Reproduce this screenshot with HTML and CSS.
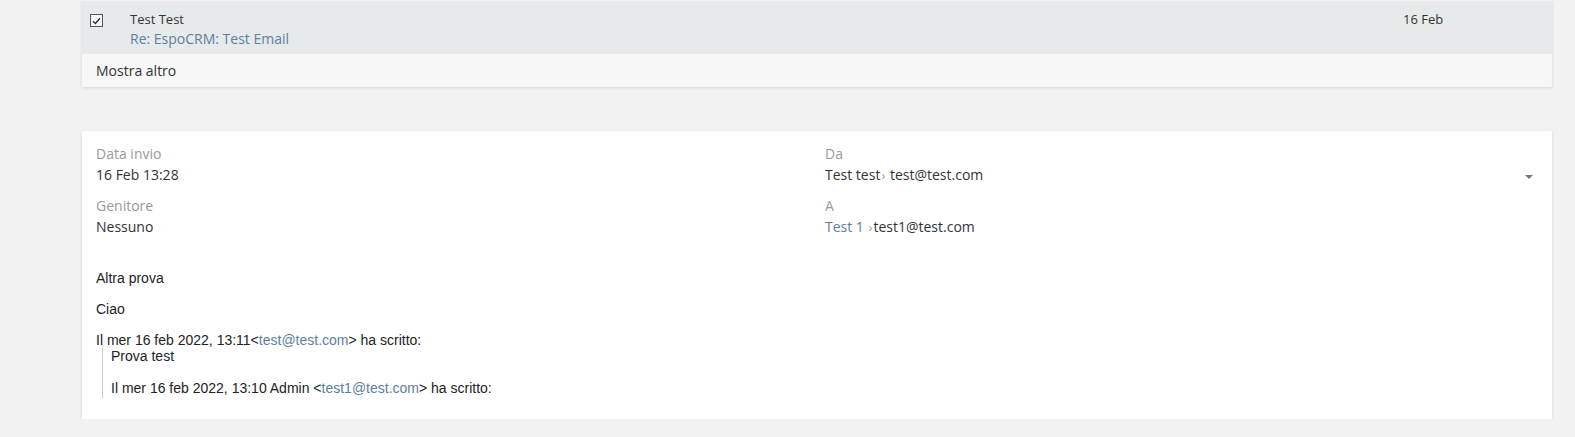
FILE: index.html
```html
<!doctype html>
<html lang="it">
<head>
<meta charset="utf-8">
<title>Email</title>
<link rel="stylesheet" href="styles.css">
</head>
<body>

<div class="wrap">
  <div class="panel list">
    <div class="item selected">
      <span class="check">
        <svg width="9" height="8" viewBox="0 0 9 8"><path d="M1 4.2 3.4 6.5 8 1.3" fill="none" stroke="#333" stroke-width="1.4"/></svg>
      </span>
      <div class="item-main">
        <div class="item-name">Test Test</div>
        <a class="item-subject">Re: EspoCRM: Test Email</a>
      </div>
      <div class="item-date">16 Feb</div>
    </div>
    <div class="show-more">Mostra altro</div>
  </div>

  <div class="panel detail">
    <span class="caret"></span>
    <div class="fields">
      <div class="field">
        <div class="label">Data invio</div>
        <div class="value">16 Feb 13:28</div>
      </div>
      <div class="field">
        <div class="label">Da</div>
        <div class="value">Test test<span class="sep">›</span> test@test.com</div>
      </div>
      <div class="field">
        <div class="label">Genitore</div>
        <div class="value">Nessuno</div>
      </div>
      <div class="field">
        <div class="label">A</div>
        <div class="value"><a>Test 1</a> <span class="sep">›</span>test1@test.com</div>
      </div>
    </div>

    <div class="mail-body">
      <p>Altra prova</p>
      <p>Ciao</p>
      <div>Il mer 16 feb 2022, 13:11&lt;<a>test@test.com</a>&gt; ha scritto:</div>
      <blockquote>
        Prova test<br><br>
        Il mer 16 feb 2022, 13:10 Admin &lt;<a>test1@test.com</a>&gt; ha scritto:
      </blockquote>
    </div>
  </div>
</div>

</body>
</html>
```

FILE: styles.css
```css
:root{--text:#333;--muted:#999;--link:#5d7e9c;--bg:#f2f2f2;}
body{margin:0;background:var(--bg);font-family:"Open Sans",sans-serif;font-size:14px;color:var(--text);}
a{color:var(--link);text-decoration:none;}

.wrap{padding:0 23px 0 82px;}
.panel{background:#fff;box-shadow:0 1px 3px rgba(0,0,0,.12);}

/* list */
.list{border-top:1px solid var(--bg);margin-bottom:44px;}
.item{display:grid;grid-template-columns:40px 1fr 149px;padding:8px 0 6px 8px;}
.item.selected{background:#e7eaeb;}
.check{width:11px;height:11px;margin-top:5px;border:1px solid #555;background:#f4f5f6;display:flex;align-items:center;justify-content:center;}
.item-name{font-size:13px;line-height:20px;}
.item-subject{display:block;line-height:19px;}
.item-date{font-size:13px;line-height:20px;}
.show-more{background:#f7f7f7;line-height:20px;padding:7px 14px 6px;}

/* detail */
.detail{position:relative;padding:13px 14px 21px;}
.caret{position:absolute;right:19px;top:44px;border-left:4px solid transparent;border-right:4px solid transparent;border-top:4px solid #777;}
.fields{display:grid;grid-template-columns:729px 1fr;}
.field{margin-bottom:11px;}
.label{color:var(--muted);line-height:20px;margin-bottom:1px;}
.value{line-height:20px;}
.sep{color:var(--muted);font-size:13px;margin:0 1px;}

.mail-body{margin-top:22px;font-family:"Liberation Sans",Arial,sans-serif;font-size:14px;line-height:16px;color:#222;}
.mail-body p{margin:0 0 15px;}
blockquote{margin:0 0 0 6px;padding:0 0 2px 8px;border-left:1px solid #ccc;}
```
